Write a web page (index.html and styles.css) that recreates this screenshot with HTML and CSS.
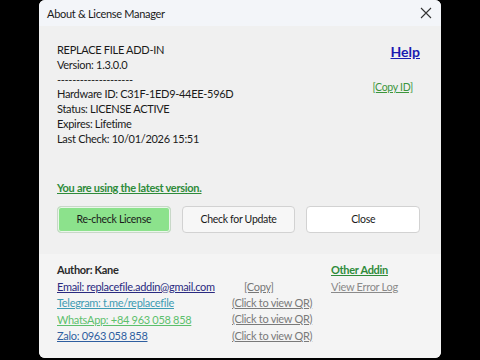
FILE: index.html
```html
<!DOCTYPE html>
<html lang="en">
<head>
  <meta charset="UTF-8" />
  <title>About &amp; License Manager</title>
  <link rel="stylesheet" href="styles.css">
</head>
<body>
  <div class="window">
    <div class="titlebar">
      <span class="title">About &amp; License Manager</span>
      <svg class="close" width="12" height="12" viewBox="0 0 12 12">
        <path d="M1 1 L11 11 M11 1 L1 11" stroke="#333" stroke-width="1.1" fill="none" />
      </svg>
    </div>

    <div class="main">
      <div class="info-row">
        <div class="info">
          <div>REPLACE FILE ADD-IN</div>
          <div>Version: 1.3.0.0</div>
          <div>--------------------</div>
          <div>Hardware ID: C31F-1ED9-44EE-596D</div>
          <div>Status: LICENSE ACTIVE</div>
          <div>Expires: Lifetime</div>
          <div>Last Check: 10/01/2026 15:51</div>
        </div>
        <div class="side">
          <a class="help">Help</a>
          <a class="copy-id">[Copy ID]</a>
        </div>
      </div>

      <div class="update-msg">You are using the latest version.</div>

      <div class="buttons">
        <button class="btn btn-green">Re-check License</button>
        <button class="btn btn-grey">Check for Update</button>
        <button class="btn btn-white">Close</button>
      </div>
    </div>

    <div class="footer">
      <div class="col contacts">
        <div class="author">Author: Kane</div>
        <a class="email">Email: replacefile.addin@gmail.com</a>
        <a class="telegram">Telegram: t.me/replacefile</a>
        <a class="whatsapp">WhatsApp: +84 963 058 858</a>
        <a class="zalo">Zalo: 0963 058 858</a>
      </div>
      <div class="col actions">
        <div class="blank"></div>
        <a class="copy">[Copy]</a>
        <a class="qr">(Click to view QR)</a>
        <a class="qr qr-tight">(Click to view QR)</a>
        <a class="qr qr-low">(Click to view QR)</a>
      </div>
      <div class="col extra">
        <a class="other">Other Addin</a>
        <a class="errlog">View Error Log</a>
      </div>
    </div>
  </div>
</body>
</html>
```

FILE: styles.css
```css
html, body {
  margin: 0;
  padding: 0;
  background: #000;
  font-family: 'Lato', 'Noto Sans', sans-serif;
  font-size: 11px;
  letter-spacing: -0.3px;
  color: #1a1a1a;
}

a {
  text-decoration: underline;
  cursor: pointer;
}

.window {
  width: 402px;
  height: 358px;
  margin-left: 39px;
  background: #f0f0f0;
  border-radius: 6px;
  overflow: hidden;
  display: flex;
  flex-direction: column;
}

.titlebar {
  height: 26px;
  display: flex;
  align-items: center;
  justify-content: space-between;
  padding: 0 8px 0 8px;
  background: #f3f5f9;
}

.title {
  font-size: 11px;
  color: #1a1a1a;
}

.close {
  margin-right: 1px;
}

.main {
  padding: 17px 21px 0 18px;
  height: 211px;
}

.info-row {
  display: flex;
  justify-content: space-between;
}

.info {
  line-height: 14.8px;
}

.side {
  display: flex;
  flex-direction: column;
  align-items: flex-end;
}

.help {
  font-size: 14px;
  font-weight: bold;
  letter-spacing: 0;
  color: #1a1ab0;
  margin-top: 0;
}

.copy-id {
  font-size: 10.5px;
  color: #3c963c;
  margin-top: 21px;
  margin-right: 7px;
}

.update-msg {
  margin-top: 33px;
  font-size: 11px;
  font-weight: bold;
  color: #2e8b3a;
  text-decoration: underline;
  line-height: 15px;
  letter-spacing: -0.3px;
}

.buttons {
  display: flex;
  gap: 11px;
  margin-top: 11px;
}

.btn {
  flex: 1;
  height: 27px;
  font-family: inherit;
  font-size: 10.5px;
  letter-spacing: -0.3px;
  color: #1a1a1a;
  border: 1px solid #d2d2d2;
  border-radius: 4px;
  padding: 0;
}

.btn-green {
  background: #8ce28c;
  border-color: #c8d8c8;
  box-shadow: inset 0 0 0 1px #eaf6ea;
}

.btn-grey {
  background: #f7f7f7;
}

.btn-white {
  background: #ffffff;
}

.footer {
  flex: 1;
  background: #f4f4f4;
  display: grid;
  grid-template-columns: 175px 99px 1fr;
  padding: 8px 0 0 18px;
}

.col {
  display: flex;
  flex-direction: column;
}

.col > * {
  line-height: 16.5px;
  height: 16.5px;
  white-space: nowrap;
}

.author {
  font-weight: bold;
  color: #2a2a2a;
}

.email { color: #2a2a80; }
.telegram { color: #3d9bb3; }
.whatsapp { color: #5cc06c; }
.zalo { color: #2f5fa0; }

.copy {
  color: #777;
  margin-left: 12px;
}

.qr {
  color: #7a7a7a;
}

.qr-tight {
  margin-top: -1px;
}

.qr-low {
  margin-top: 1px;
}

.other {
  font-weight: bold;
  color: #2e8b3a;
}

.errlog {
  color: #8a8a8a;
}
```
